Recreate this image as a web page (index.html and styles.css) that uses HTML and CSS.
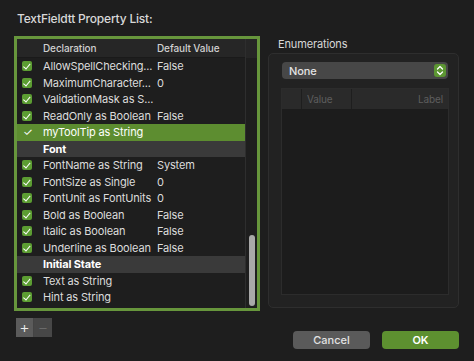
FILE: index.html
```html
<!DOCTYPE html>
<html lang="en">
<head>
    <meta charset="UTF-8">
    <title>TextFieldtt Property List</title>
    <link rel="stylesheet" href="styles.css">
</head>
<body>
<div class="dialog">
    <div class="left-col">
        <div class="title">TextFieldtt Property List:</div>
        <div class="prop-list">
            <div class="list-body">
                <div class="list-header">
                    <span class="col-check"></span>
                    <span class="col-decl">Declaration</span>
                    <span class="col-value">Default Value</span>
                </div>
                <div class="row"><span class="col-check"><span class="check"></span></span><span class="col-decl">AllowSpellChecking...</span><span class="col-value">False</span></div>
                <div class="row"><span class="col-check"><span class="check"></span></span><span class="col-decl">MaximumCharacter...</span><span class="col-value">0</span></div>
                <div class="row"><span class="col-check"><span class="check"></span></span><span class="col-decl">ValidationMask as S...</span><span class="col-value"></span></div>
                <div class="row"><span class="col-check"><span class="check"></span></span><span class="col-decl">ReadOnly as Boolean</span><span class="col-value">False</span></div>
                <div class="row selected"><span class="col-check"><span class="tick">✓</span></span><span class="col-decl">myToolTip as String</span><span class="col-value"></span></div>
                <div class="row section"><span class="col-check"></span><span class="col-decl">Font</span></div>
                <div class="row"><span class="col-check"><span class="check"></span></span><span class="col-decl">FontName as String</span><span class="col-value">System</span></div>
                <div class="row"><span class="col-check"><span class="check"></span></span><span class="col-decl">FontSize as Single</span><span class="col-value">0</span></div>
                <div class="row"><span class="col-check"><span class="check"></span></span><span class="col-decl">FontUnit as FontUnits</span><span class="col-value">0</span></div>
                <div class="row"><span class="col-check"><span class="check"></span></span><span class="col-decl">Bold as Boolean</span><span class="col-value">False</span></div>
                <div class="row"><span class="col-check"><span class="check"></span></span><span class="col-decl">Italic as Boolean</span><span class="col-value">False</span></div>
                <div class="row"><span class="col-check"><span class="check"></span></span><span class="col-decl">Underline as Boolean</span><span class="col-value">False</span></div>
                <div class="row section"><span class="col-check"></span><span class="col-decl">Initial State</span></div>
                <div class="row"><span class="col-check"><span class="check"></span></span><span class="col-decl">Text as String</span><span class="col-value"></span></div>
                <div class="row"><span class="col-check"><span class="check"></span></span><span class="col-decl">Hint as String</span><span class="col-value"></span></div>
            </div>
            <div class="scroll-col">
                <div class="scroll-head"></div>
                <div class="scroll-track"><div class="scroll-thumb"></div></div>
            </div>
        </div>
        <div class="add-remove">
            <button class="ar-btn add">+</button>
            <button class="ar-btn remove">−</button>
        </div>
    </div>

    <div class="right-col">
        <div class="label">Enumerations</div>
        <div class="group-box">
            <div class="popup">
                <span>None</span>
                <span class="stepper">
                    <svg width="8" height="11" viewBox="0 0 8 11"><path d="M1.5 4 L4 1.5 L6.5 4 M1.5 7 L4 9.5 L6.5 7" fill="none" stroke="#fff" stroke-width="1.3" stroke-linecap="round" stroke-linejoin="round"/></svg>
                </span>
            </div>
            <div class="enum-table">
                <div class="enum-header">
                    <span class="eh-blank"></span>
                    <span class="eh-value">Value</span>
                    <span class="eh-label">Label</span>
                </div>
                <div class="enum-body"></div>
            </div>
        </div>
        <div class="buttons">
            <button class="btn cancel">Cancel</button>
            <button class="btn ok">OK</button>
        </div>
    </div>
</div>
</body>
</html>
```

FILE: styles.css
```css
* {
    margin: 0;
    padding: 0;
    box-sizing: border-box;
}
body {
    font-family: 'Inter', 'Liberation Sans', sans-serif;
    font-size: 11px;
    letter-spacing: -0.15px;
    background-color: #1e1e1e;
    color: #dcdcdc;
    width: 474px;
    height: 361px;
    overflow: hidden;
}
.dialog {
    display: flex;
    padding: 0 14px;
}
.left-col {
    width: 246px;
    display: flex;
    flex-direction: column;
}
.title {
    margin-top: 11px;
    margin-bottom: 9px;
    padding-left: 3px;
    line-height: 16px;
    font-size: 12px;
    font-weight: 500;
    letter-spacing: -0.2px;
    color: #d8d8d8;
}
.prop-list {
    height: 275px;
    border: 3px solid #67963c;
    background: #1e1e1e;
    display: flex;
}
.list-body {
    flex: 1;
    display: flex;
    flex-direction: column;
}
.list-header {
    display: flex;
    align-items: center;
    height: 19px;
    background: #262626;
    border-bottom: 1px solid #1a1a1a;
    color: #d0d0d0;
    font-size: 10px;
    font-weight: 500;
    letter-spacing: -0.1px;
}
.row {
    display: flex;
    align-items: center;
    height: 16.5px;
    white-space: nowrap;
}
.col-check {
    width: 26px;
    display: flex;
    align-items: center;
    padding-left: 5px;
}
.col-decl {
    width: 114px;
}
.col-value {
    flex: 1;
}
.check {
    width: 10px;
    height: 10px;
    border-radius: 2px;
    background: #5c9d32;
    position: relative;
}
.check::after {
    content: "";
    position: absolute;
    left: 3.3px;
    top: 1px;
    width: 2.5px;
    height: 5.5px;
    border: solid #fff;
    border-width: 0 1.6px 1.6px 0;
    transform: rotate(40deg);
}
.tick {
    font-size: 11px;
    color: #fff;
    padding-left: 1px;
}
.row.selected {
    background: #5d8d30;
    color: #fff;
}
.row.section {
    background: #3a3a3a;
    font-weight: 700;
    color: #fff;
}
.scroll-col {
    width: 12px;
    display: flex;
    flex-direction: column;
    border-left: 1px solid #2e2e2e;
}
.scroll-head {
    height: 19px;
    background: #262626;
}
.scroll-track {
    flex: 1;
    display: flex;
    flex-direction: column;
    justify-content: flex-end;
    padding: 0 0 2px 3px;
}
.scroll-thumb {
    width: 6px;
    height: 71px;
    border-radius: 3px;
    background: #a9a9a9;
}
.add-remove {
    display: flex;
    margin-top: 7px;
    margin-left: 2px;
}
.ar-btn {
    width: 18px;
    height: 19px;
    border: none;
    font-family: inherit;
    font-size: 16px;
    font-weight: 300;
    line-height: 19px;
}
.ar-btn.add {
    background: #5b5b5b;
    color: #ececec;
    border-right: 1px solid #444;
}
.ar-btn.remove {
    background: #474747;
    color: #6a6a6a;
}
.right-col {
    width: 191px;
    margin-left: 8px;
    display: flex;
    flex-direction: column;
}
.label {
    margin-top: 36px;
    margin-bottom: 1px;
    padding-left: 10px;
    line-height: 16px;
    color: #d8d8d8;
}
.group-box {
    height: 255px;
    background: #222222;
    border: 1px solid #2e2e2e;
    border-radius: 5px;
    padding: 8px 9px 0 12px;
}
.popup {
    height: 17px;
    margin-left: 1px;
    margin-right: 1px;
    background: #474747;
    border-radius: 4px;
    display: flex;
    align-items: center;
    justify-content: space-between;
    padding: 0 2px 0 7px;
    color: #e4e4e4;
    font-weight: 500;
}
.stepper {
    width: 12px;
    height: 13px;
    border-radius: 3px;
    background: #5c9632;
    display: flex;
    align-items: center;
    justify-content: center;
}
.enum-table {
    margin-top: 9px;
    height: 207px;
    border: 1px solid #2c2c2c;
    display: flex;
    flex-direction: column;
}
.enum-header {
    height: 20px;
    display: flex;
    align-items: center;
    background: #2a2a2a;
    color: #5e5e5e;
    font-size: 10px;
}
.eh-blank {
    width: 20px;
    height: 100%;
    border-right: 1px solid #1e1e1e;
}
.eh-value {
    width: 50px;
    height: 100%;
    line-height: 20px;
    padding-left: 5px;
    border-right: 1px solid #1e1e1e;
}
.eh-label {
    flex: 1;
    text-align: right;
    padding-right: 5px;
}
.enum-body {
    flex: 1;
    background: #1c1c1c;
}
.buttons {
    display: flex;
    justify-content: flex-end;
    gap: 12px;
    margin-top: 23px;
}
.btn {
    width: 77px;
    height: 18px;
    border: none;
    border-radius: 4px;
    font-family: inherit;
    font-size: 11px;
    font-weight: 500;
}
.btn.cancel {
    background: #5a5a5a;
    color: #e2e2e2;
}
.btn.ok {
    background: #5d9030;
    color: #fff;
    font-weight: 600;
}
```
